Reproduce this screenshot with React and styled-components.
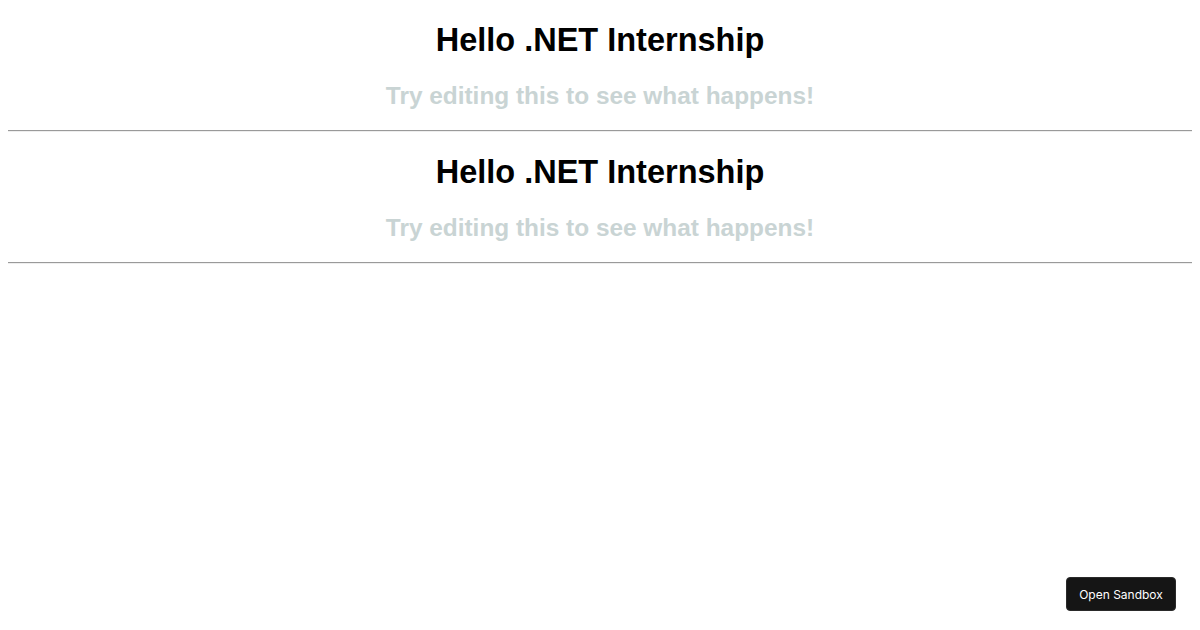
import React from "react";
import styled, { createGlobalStyle } from "styled-components";

const GlobalStyle = createGlobalStyle`
  body {
    margin: 0 8px 8px;
    background: #ffffff;
    font-family: "Liberation Sans", Arial, Helvetica, sans-serif;
  }
`;

const Section = styled.div`
  text-align: center;
`;

const Title = styled.h1`
  font-size: 32.5px;
  font-weight: bold;
  color: #000000;
  margin: ${(p) => (p.$first ? "21.5px" : "22.5px")} 0 23px;
`;

const Subtitle = styled.h2`
  font-size: 24.4px;
  font-weight: bold;
  color: #c9d4d4;
  margin: 0 0 20px;
`;

const Divider = styled.hr`
  margin: 8px 0;
  border: none;
  border-top: 1px solid #9a9a9a;
  border-bottom: 1px solid #eeeeee;
  height: 0;
`;

const OpenButton = styled.button`
  position: fixed;
  right: 24px;
  bottom: 19px;
  width: 110px;
  height: 34px;
  background: #151515;
  color: #ffffff;
  border: 1px solid #2a2a2a;
  border-radius: 4px;
  font-family: "Inter", "Liberation Sans", sans-serif;
  font-size: 12px;
  cursor: pointer;
`;

function Greeting({ first }) {
  return (
    <Section>
      <Title $first={first}>Hello .NET Internship</Title>
      <Subtitle>Try editing this to see what happens!</Subtitle>
      <Divider />
    </Section>
  );
}

export default function App() {
  return (
    <>
      <GlobalStyle />
      <Greeting first />
      <Greeting />
      <OpenButton>Open Sandbox</OpenButton>
    </>
  );
}
